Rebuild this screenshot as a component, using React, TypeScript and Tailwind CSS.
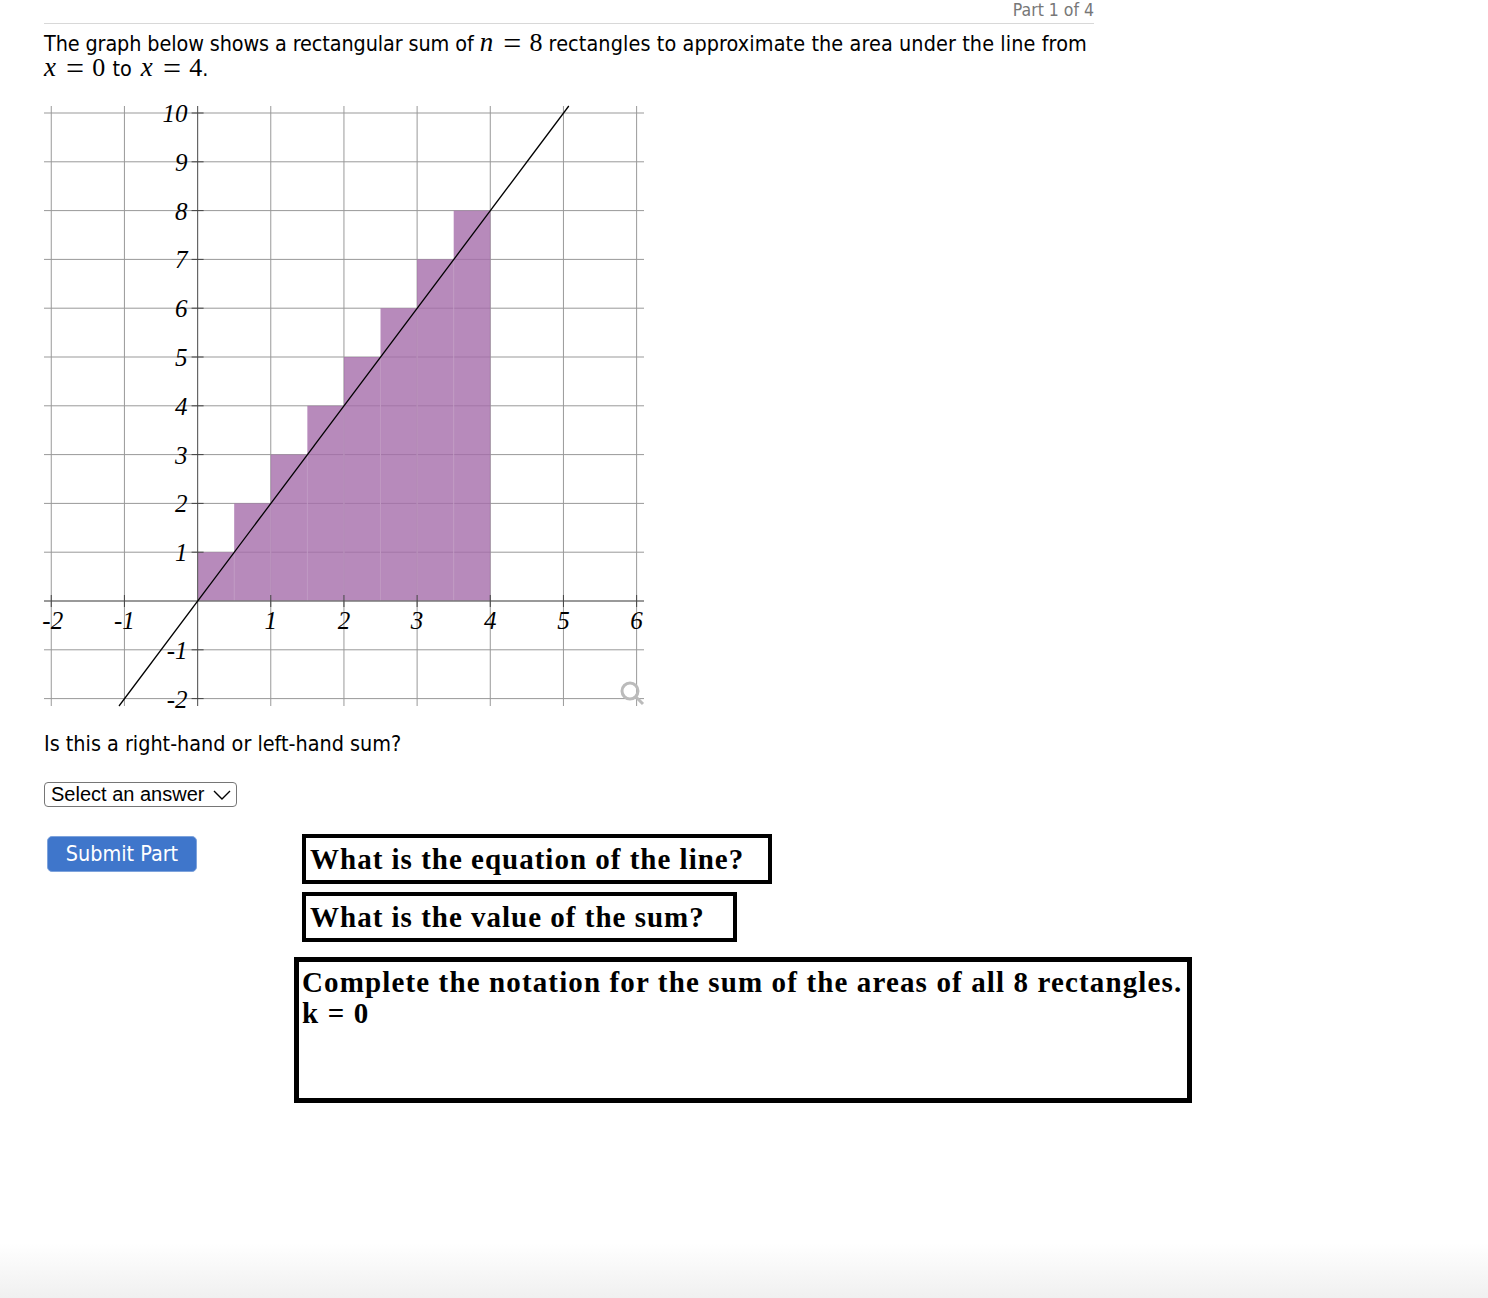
const xTicks = [-2, -1, 1, 2, 3, 4, 5, 6];
const yTicks = [-2, -1, 1, 2, 3, 4, 5, 6, 7, 8, 9, 10];
const ox = 153.6;
const oy = 495;
const ux = 73.17;
const uy = 48.8;

function Graph() {
  const rects = [1, 2, 3, 4, 5, 6, 7, 8];
  return (
    <svg width="600" height="600" viewBox="0 0 600 600" className="block mt-[25px] overflow-visible">
      {/* grid */}
      {xTicks.map((t) => (
        <line key={t} x1={ox + t * ux} x2={ox + t * ux} y1="0" y2="600" stroke="#999" strokeWidth="1" />
      ))}
      {yTicks.map((t) => (
        <line key={t} x1="0" x2="600" y1={oy - t * uy} y2={oy - t * uy} stroke="#999" strokeWidth="1" />
      ))}

      {/* rectangles */}
      {rects.map((k) => (
        <rect
          key={k}
          x={ox + (k - 1) * 0.5 * ux}
          y={oy - k * uy}
          width={0.5 * ux}
          height={k * uy}
          fill="#a56daa"
          fillOpacity="0.8"
        />
      ))}
      {rects.slice(0, 7).map((k) => (
        <line
          key={k}
          x1={ox + k * 0.5 * ux}
          x2={ox + k * 0.5 * ux}
          y1={oy - k * uy}
          y2={oy}
          stroke="#bf98c2"
          strokeWidth="1"
        />
      ))}

      {/* axes */}
      <line x1="0" x2="600" y1={oy} y2={oy} stroke="#777" strokeWidth="1.6" />
      <line x1={ox} x2={ox} y1="0" y2="600" stroke="#666" strokeWidth="1.2" />
      {xTicks.map((t) => (
        <line key={t} x1={ox + t * ux} x2={ox + t * ux} y1={oy - 6} y2={oy + 6} stroke="#444" strokeWidth="1" />
      ))}
      {yTicks.map((t) => (
        <line key={t} x1={ox - 6} x2={ox + 6} y1={oy - t * uy} y2={oy - t * uy} stroke="#444" strokeWidth="1" />
      ))}

      {/* line y = 2x */}
      <line x1="75" x2="524.8" y1="600" y2="0" stroke="#000" strokeWidth="1.3" />

      {/* labels */}
      <g fontFamily="'Liberation Serif', serif" fontStyle="italic" fontSize="25" fill="#000">
        {xTicks.map((t) => (
          <text key={t} x={ox + t * ux + (t === -2 ? 1.5 : 0)} y={oy + 28} textAnchor="middle">
            {t}
          </text>
        ))}
        {yTicks.map((t) => (
          <text key={t} x={ox - 10} y={oy - t * uy + 9} textAnchor="end">
            {t}
          </text>
        ))}
      </g>

      {/* zoom icon */}
      <circle cx="586" cy="585" r="8" fill="none" stroke="#bbb" strokeWidth="3" />
      <line x1="592" y1="591" x2="599" y2="598" stroke="#bbb" strokeWidth="3" />
    </svg>
  );
}

function Num({ children }: { children: React.ReactNode }) {
  return <span className="font-['Liberation_Serif',serif] text-[26px] leading-[0] tracking-normal">{children}</span>;
}

function V({ children }: { children: React.ReactNode }) {
  return <span className="font-['Liberation_Serif',serif] italic text-[27px] leading-[0] tracking-normal">{children}</span>;
}

function Eq() {
  return (
    <span className="font-['Liberation_Serif',serif] text-[32px] leading-[0] ml-[4px] mr-[2px] align-[-3px]">=</span>
  );
}

export default function App() {
  return (
    <div className="min-h-[1298px] flex flex-col bg-white text-black font-['DejaVu_Sans',sans-serif] [font-stretch:condensed]">
      <div className="flex-1 ml-[44px] w-[1050px]">
        <div className="h-[24px] border-b border-[#d8d8d8] text-right text-[17.5px] leading-[20px] text-[#777]">
          Part 1 of 4
        </div>
        <p className="mt-[7px] text-[21.4px] leading-[25px] whitespace-nowrap">
          <span className="tracking-[-0.1px]">The graph below shows a rectangular sum of</span> <V>n</V> <Eq />{" "}
          <Num>8</Num> <span className="tracking-[0.11px]">rectangles to approximate the area under the line from</span>
          <br />
          <V>x</V> <Eq /> <Num>0</Num> <span className="ml-[1px]">to</span>{" "}
          <span className="ml-[3px]">
            <V>x</V>
          </span>{" "}
          <Eq /> <Num>4</Num>.
        </p>

        <Graph />

        <p className="mt-[25px] text-[21.4px] leading-[25px]">Is this a right-hand or left-hand sum?</p>

        <div className="relative mt-[26px] w-[193px] h-[25px]">
          <select className="appearance-none w-full h-full bg-white border border-[#767676] rounded-[4px] pl-[6px] text-[20px] leading-[23px] font-['Liberation_Sans',sans-serif] [font-stretch:normal] text-black">
            <option>Select an answer</option>
          </select>
          <svg width="18" height="10" viewBox="0 0 18 10" className="absolute right-[6px] top-[8px] pointer-events-none">
            <path d="M1 1 L9 9 L17 1" fill="none" stroke="#000" strokeWidth="1.4" />
          </svg>
        </div>

        <div className="mt-[27px] flex items-start">
          <button className="shrink-0 whitespace-nowrap mt-[2px] ml-[3px] w-[150px] h-[36px] rounded-[5px] border border-[#7ea3dc] bg-[#3f76cb] text-white text-[21.4px] leading-[32px]">
            Submit Part
          </button>
          <div className="ml-[105px] flex flex-col items-start font-['Liberation_Serif',serif] font-bold tracking-[1px] [font-stretch:normal]">
            <div className="w-[470px] h-[50px] border-[4px] border-black pl-[4px] text-[29px] leading-[42px] whitespace-nowrap">
              What is the equation of the line?
            </div>
            <div className="mt-[8px] w-[435px] h-[50px] border-[4px] border-black pl-[4px] text-[29px] leading-[42px] whitespace-nowrap">
              What is the value of the sum?
            </div>
            <div className="mt-[15px] -ml-[8px] w-[898px] h-[146px] border-[5px] border-black pl-[3px] pt-[5px] text-[29px] leading-[31px] whitespace-nowrap tracking-[1.13px]">
              Complete the notation for the sum of the areas of all 8 rectangles.
              <br />k = 0
            </div>
          </div>
        </div>
      </div>
      <div className="h-[55px] bg-gradient-to-b from-white to-[#f0f0f0]" />
    </div>
  );
}
